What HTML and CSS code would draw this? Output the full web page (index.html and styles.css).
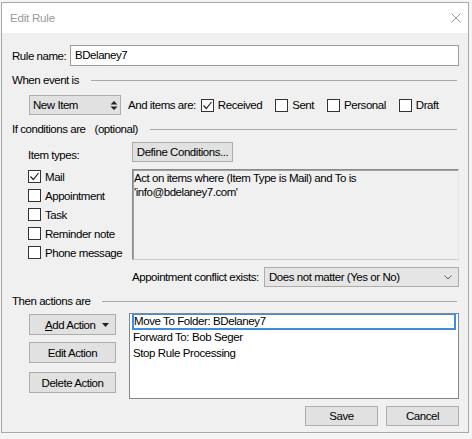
FILE: index.html
```html
<!DOCTYPE html>
<html lang="en">
<head>
<meta charset="UTF-8">
<meta name="viewport" content="width=device-width, initial-scale=1.0">
<title>Edit Rule</title>
<link rel="stylesheet" href="styles.css">
</head>
<body>
<div class="dialog">
    <div class="titlebar">
        <span class="title">Edit Rule</span>
        <svg class="close" width="10" height="10" viewBox="0 0 10 10"><path d="M0.5 0.5 L9.5 9.5 M9.5 0.5 L0.5 9.5" stroke="#9a9a9a" stroke-width="1"/></svg>
    </div>

    <div class="content">
        <div class="name-row">
            <span class="name-label">Rule name:</span>
            <div class="textbox">BDelaney7</div>
        </div>

        <div class="group-head"><span>When event is</span></div>
        <div class="event-row">
            <div class="spin">
                <span>New Item</span>
                <svg width="8" height="11" viewBox="0 0 8 11"><path d="M0.5 4.5 L4 1 L7.5 4.5Z M0.5 6.5 L4 10 L7.5 6.5Z" fill="#222"/></svg>
            </div>
            <span class="items-are">And items are:</span>
            <span class="check first"><span class="box"><svg width="11" height="11" viewBox="0 0 11 11"><path d="M1.5 5.5 L4.3 8.5 L9.5 2" fill="none" stroke="#222" stroke-width="1.2"/></svg></span>Received</span>
            <span class="check"><span class="box"></span>Sent</span>
            <span class="check"><span class="box"></span>Personal</span>
            <span class="check"><span class="box"></span>Draft</span>
        </div>

        <div class="group-head"><span>If conditions are<span class="optional">(optional)</span></span></div>
        <div class="conditions">
            <div class="types">
                <div class="types-label">Item types:</div>
                <div class="type-list">
                    <span class="check"><span class="box"><svg width="11" height="11" viewBox="0 0 11 11"><path d="M1.5 5.5 L4.3 8.5 L9.5 2" fill="none" stroke="#222" stroke-width="1.2"/></svg></span>Mail</span>
                    <span class="check"><span class="box"></span>Appointment</span>
                    <span class="check"><span class="box"></span>Task</span>
                    <span class="check"><span class="box"></span>Reminder note</span>
                    <span class="check"><span class="box"></span>Phone message</span>
                </div>
            </div>
            <div class="cond-main">
                <div class="btn define">Define Conditions...</div>
                <div class="desc">Act on items where (Item Type is Mail) and To is<br>'info@bdelaney7.com'</div>
                <div class="conflict">
                    <span>Appointment conflict exists:</span>
                    <div class="dropdown">
                        <span>Does not matter (Yes or No)</span>
                        <svg width="8" height="5" viewBox="0 0 8 5"><path d="M0.5 0.5 L4 4 L7.5 0.5" fill="none" stroke="#555" stroke-width="1"/></svg>
                    </div>
                </div>
            </div>
        </div>

        <div class="group-head"><span>Then actions are</span></div>
        <div class="actions">
            <div class="action-buttons">
                <div class="btn add"><span><u>A</u>dd Action</span><svg width="7" height="4" viewBox="0 0 7 4"><path d="M0 0 H7 L3.5 4Z" fill="#222"/></svg></div>
                <div class="btn edit">Edit Action</div>
                <div class="btn delete">Delete Action</div>
            </div>
            <div class="action-list">
                <div class="action-item selected">Move To Folder: BDelaney7</div>
                <div class="action-item">Forward To: Bob Seger</div>
                <div class="action-item">Stop Rule Processing</div>
            </div>
        </div>

        <div class="footer">
            <div class="btn">Save</div>
            <div class="btn">Cancel</div>
        </div>
    </div>
</div>
</body>
</html>
```

FILE: styles.css
```css
* {
    box-sizing: border-box;
}

body {
    margin: 0;
    padding: 2px 0 0 1px;
    background: #f4f4f4;
    font-family: "Liberation Sans", Arial, sans-serif;
    font-size: 11.5px;
    letter-spacing: -0.45px;
    color: #000;
}

.dialog {
    width: 468px;
    border: 1px solid #a9a9a9;
    background: #f0f0f0;
}

.titlebar {
    height: 30px;
    background: #fff;
    display: flex;
    align-items: center;
    justify-content: space-between;
    padding: 0 7px 0 8px;
}

.title {
    color: #9a9a9a;
    font-size: 11.5px;
    letter-spacing: -0.2px;
}

.content {
    padding: 12px 9px 6px 10px;
}

/* rule name */
.name-row {
    display: flex;
    align-items: center;
    height: 21px;
}

.name-label {
    width: 58px;
}

.textbox {
    flex: 1;
    height: 21px;
    line-height: 19px;
    padding-left: 4px;
    background: #fff;
    border: 1px solid #9c9c9c;
}

/* section headings with a rule */
.group-head {
    display: flex;
    align-items: center;
    height: 14px;
    margin-top: 7px;
}

.group-head::after {
    content: "";
    flex: 1;
    height: 1px;
    background: #a8a8a8;
    margin: 1px 2px 0 12px;
}

.optional {
    margin-left: 9px;
}

/* event row */
.event-row {
    display: flex;
    align-items: center;
    height: 20px;
    margin-top: 8px;
    padding-left: 17px;
}

.spin {
    width: 92px;
    height: 20px;
    display: flex;
    align-items: center;
    justify-content: space-between;
    padding: 0 2px 0 3px;
    background: #e1e1e1;
    border: 1px solid #adadad;
}

.items-are {
    margin-left: 7px;
}

.check {
    display: flex;
    align-items: center;
}

.event-row .check {
    margin-left: 13px;
}

.event-row .check.first {
    margin-left: 5px;
}

.box {
    width: 13px;
    height: 13px;
    margin-right: 4px;
    background: #fff;
    border: 1px solid #333;
    display: flex;
    align-items: center;
    justify-content: center;
}

/* conditions */
.conditions {
    display: flex;
    margin-top: 6px;
    padding-left: 16px;
}

.types {
    width: 104px;
}

.types-label {
    margin-top: 6px;
    line-height: 14px;
}

.type-list {
    margin-top: 5px;
}

.type-list .check {
    height: 19px;
}

.cond-main {
    flex: 1;
    display: flex;
    flex-direction: column;
}

.btn {
    height: 20px;
    display: flex;
    align-items: center;
    justify-content: center;
    background: #e1e1e1;
    border: 1px solid #adadad;
}

.define {
    width: 101px;
}

.desc {
    height: 91px;
    margin-top: 7px;
    padding: 1px 1px;
    line-height: 14px;
    border-top: 1px solid #8a8a8a;
    border-left: 1px solid #8a8a8a;
    border-right: 1px solid #e6e6e6;
    border-bottom: 1px solid #c8c8c8;
    box-shadow: inset 1px 1px 0 #a0a0a0;
}

.conflict {
    display: flex;
    align-items: center;
    height: 20px;
    margin-top: 7px;
}

.dropdown {
    width: 195px;
    height: 20px;
    margin-left: auto;
    display: flex;
    align-items: center;
    justify-content: space-between;
    padding: 0 6px 0 4px;
    background: #e5e5e5;
    border: 1px solid #adadad;
}

/* actions */
.actions {
    display: flex;
    margin-top: 5px;
    padding-left: 17px;
}

.action-buttons {
    width: 87px;
    padding-top: 1px;
}

.action-buttons .btn {
    height: 21px;
}

.add {
    justify-content: space-between;
    padding: 0 6px 0 15px;
}

.edit {
    margin-top: 7px;
}

.delete {
    margin-top: 9px;
}

.action-list {
    flex: 1;
    height: 86px;
    margin-left: 13px;
    padding: 0 2px;
    background: #fff;
    border: 1px solid #828790;
    letter-spacing: -0.4px;
}

.action-item {
    height: 16px;
    line-height: 15px;
    padding-left: 1px;
}

.action-item.selected {
    border: 2px solid #3d8ee0;
    border-top-width: 1px;
    line-height: 13px;
    padding-left: 0;
}

/* bottom buttons */
.footer {
    display: flex;
    justify-content: flex-end;
    gap: 8px;
    margin-top: 7px;
}

.footer .btn {
    width: 73px;
}
```
